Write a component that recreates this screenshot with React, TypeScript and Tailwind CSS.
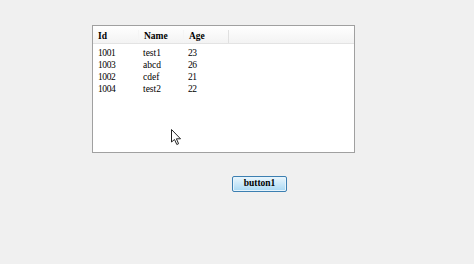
import React from 'react';

const rows = [
  { id: '1001', name: 'test1', age: '23' },
  { id: '1003', name: 'abcd', age: '26' },
  { id: '1002', name: 'cdef', age: '21' },
  { id: '1004', name: 'test2', age: '22' },
];

const font = { fontFamily: '"Liberation Serif", "DejaVu Serif", serif' };

function Cursor() {
  return (
    <svg width="12" height="17" viewBox="0 0 12 17" className="absolute left-[78px] top-[103px]">
      <path d="M0.5 0.5 L0.5 13 L3.5 10.5 L5.8 15.5 L7.6 14.7 L5.4 9.8 L9.5 9.8 Z" fill="#fff" stroke="#222" strokeWidth="1" strokeLinejoin="round" />
    </svg>
  );
}

export default function App() {
  return (
    <div className="w-[474px] h-[264px] bg-[#f0f0f0] pl-[92px] pt-[25px] text-[9.5px] text-black" style={font}>
      {/* list view */}
      <div className="relative w-[263px] h-[128px] border border-[#a0a0a0] bg-white">
        <div className="flex h-[18px] pt-[4px] border-b border-[#e3e3e3] bg-gradient-to-b from-white to-[#f3f3f3]">
          <div className="w-[45px] pl-[5px] flex items-center font-semibold">Id</div>
          <div className="w-[45px] pl-[5px] flex items-center border-l border-[#f5f5f5] font-semibold">Name</div>
          <div className="w-[46px] pl-[5px] flex items-center border-l border-[#f5f5f5] border-r border-r-[#e0e0e0] font-semibold">Age</div>
          <div className="flex-1" />
        </div>
        <div className="pt-[3px]">
          {rows.map((r) => (
            <div key={r.id} className="flex h-[12px] items-center">
              <div className="w-[45px] pl-[5px] tracking-[-0.4px]">{r.id}</div>
              <div className="w-[45px] pl-[5px]">{r.name}</div>
              <div className="w-[46px] pl-[5px] tracking-[-0.4px]">{r.age}</div>
            </div>
          ))}
        </div>
        <Cursor />
      </div>

      <button className="mt-[23px] ml-[140px] w-[55px] h-[16px] rounded-[2px] border border-[#3c7fb1] bg-gradient-to-b from-[#eaf6fd] to-[#a9d9f4] text-[9.5px] font-bold leading-none shadow-[inset_0_0_0_1px_#e6f4fc]" style={font}>
        button1
      </button>
    </div>
  );
}
